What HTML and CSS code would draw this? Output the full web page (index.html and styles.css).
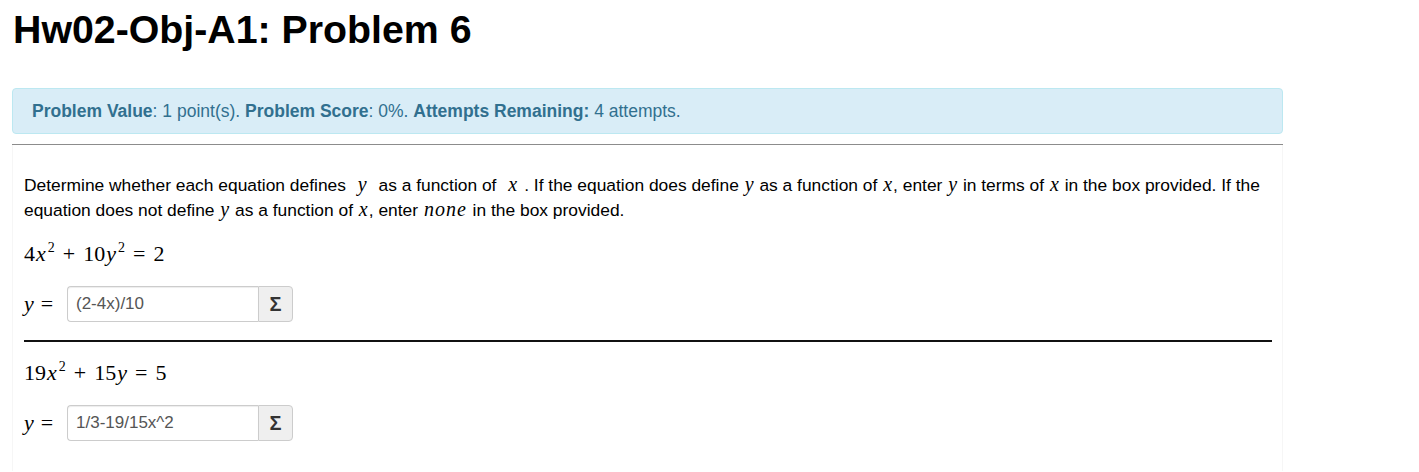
FILE: index.html
```html
<!DOCTYPE html>
<html>
<head>
<meta charset="utf-8">
<link rel="stylesheet" href="styles.css">
</head>
<body>
<div class="page">
  <h1 class="title">Hw02-Obj-A1: Problem 6</h1>
  <div class="alert">
    <b>Problem Value</b>: 1 point(s). <b>Problem Score</b>: 0%. <b>Attempts Remaining:</b> 4 attempts.
  </div>
  <div class="rule"></div>
  <div class="content">
    <p class="intro">Determine whether each equation defines <span class="m sp">y</span> as a function of <span class="m sp">x</span>. If the equation does define <span class="m">y</span> as a function of <span class="m">x</span>, enter <span class="m">y</span> in terms of <span class="m">x</span> in the box provided. If the equation does not define <span class="m">y</span> as a function of <span class="m">x</span>, enter <span class="m wide">none</span> in the box provided.</p>

    <div class="eq">4<i>x</i><sup>2</sup><span class="op">+</span>10<i>y</i><sup>2</sup><span class="op">=</span>2</div>
    <div class="answer">
      <span class="lbl"><i>y</i><span class="op">=</span></span>
      <div class="field">
        <div class="input">(2-4x)/10</div>
        <div class="btn">Σ</div>
      </div>
    </div>

    <div class="sep"></div>

    <div class="eq">19<i>x</i><sup>2</sup><span class="op">+</span>15<i>y</i><span class="op">=</span>5</div>
    <div class="answer">
      <span class="lbl"><i>y</i><span class="op">=</span></span>
      <div class="field">
        <div class="input">1/3-19/15x^2</div>
        <div class="btn">Σ</div>
      </div>
    </div>
  </div>
</div>
</body>
</html>
```

FILE: styles.css
```css
html, body {
  margin: 0;
  padding: 0;
  background: #fff;
}
body {
  font-family: "Liberation Sans", Arial, sans-serif;
  color: #000;
  font-size: 17.4px;
}
.page {
  padding-left: 12px;
  width: 1271px;
}
.title {
  margin: 8px 0 0 1px;
  font-size: 39.3px;
  line-height: 43px;
  font-weight: bold;
}
.alert {
  margin-top: 37px;
  background: #d9edf7;
  border: 1px solid #bce8f1;
  border-radius: 4px;
  color: #31708f;
  padding: 12px 19px;
  line-height: 20px;
  font-size: 17.5px;
}
.alert b { font-weight: bold; }
.rule {
  margin-top: 10px;
  border-top: 1px solid #8c8c8c;
}
.content {
  border-left: 1px solid #f6f6f6;
  border-right: 1px solid #f6f6f6;
  padding: 28px 10px 30px 11px;
}
.intro {
  margin: 0;
  line-height: 25px;
}
.m {
  font-family: "Liberation Serif", "DejaVu Serif", serif;
  font-style: italic;
  font-size: 20px;
  line-height: 1;
  margin: 0 1px;
}
.m.wide { letter-spacing: 1px; }
.sp { margin: 0 7px; }
.eq {
  font-family: "Liberation Serif", "DejaVu Serif", serif;
  font-size: 22px;
  margin-top: 18px;
  line-height: 26px;
  height: 26px;
  white-space: nowrap;
}
.eq i { font-style: italic; margin-left: 1px; }
.eq sup {
  font-size: 14px;
  vertical-align: 9px;
  line-height: 0;
  margin-left: 2px;
}
.op { margin: 0 8px; }
.answer {
  display: flex;
  align-items: center;
  margin-top: 19px;
  gap: 6px;
}
.lbl {
  font-family: "Liberation Serif", "DejaVu Serif", serif;
  font-size: 22px;
  width: 37px;
  white-space: nowrap;
}
.lbl i { font-style: italic; }
.lbl .op { margin: 0 0 0 7px; }
.field {
  display: flex;
  height: 36px;
}
.input {
  box-sizing: border-box;
  width: 191px;
  height: 36px;
  border: 1px solid #ccc;
  border-right: none;
  border-radius: 4px 0 0 4px;
  box-shadow: inset 0 1px 1px rgba(0,0,0,0.075);
  padding: 0 8px;
  line-height: 34px;
  color: #555;
  font-size: 17px;
}
.btn {
  box-sizing: border-box;
  width: 35px;
  height: 36px;
  border: 1px solid #ccc;
  border-radius: 0 4px 4px 0;
  background: #efefef;
  color: #333;
  font-weight: bold;
  font-size: 20px;
  line-height: 34px;
  text-align: center;
}
.sep {
  margin-top: 18px;
  border-top: 2px solid #111;
}
```
